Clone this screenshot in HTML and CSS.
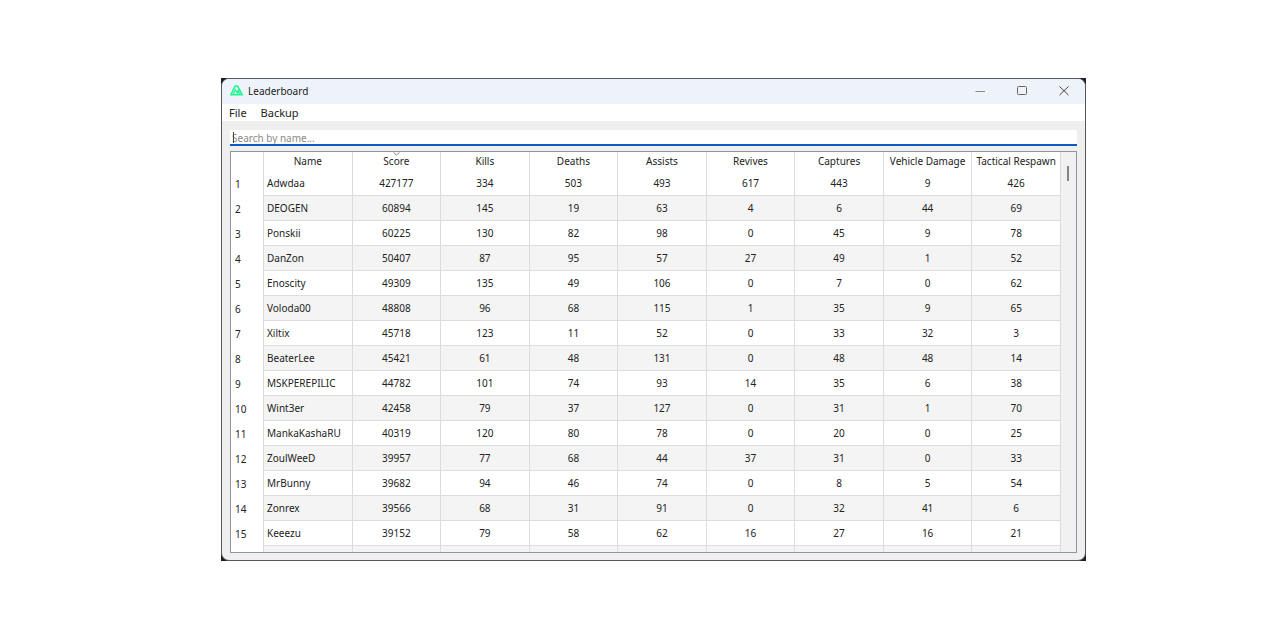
FILE: index.html
```html
<!DOCTYPE html>
<html lang="en">
<head>
  <meta charset="UTF-8">
  <title>Leaderboard</title>
  <link rel="stylesheet" href="styles.css">
</head>
<body>

<div class="frame">
  <div class="window">
    <header class="titlebar">
      <svg class="logo" width="13" height="11" viewBox="0 0 13 11" fill="none" stroke="#1df58e">
        <path d="M0.9 9.8L5.2 1H7.6L12.1 9.8Z" stroke-width="1.6" />
        <path d="M3.4 9.4L5.4 4.6L7.2 8.2L8.2 5.2L9.8 9.4" stroke-width="1.2" />
      </svg>
      <span class="title">Leaderboard</span>
      <button class="win-btn" aria-label="Minimize">
        <svg width="10" height="10" viewBox="0 0 10 10"><path d="M0.5 5.5H10" stroke="#888" /></svg>
      </button>
      <button class="win-btn" aria-label="Maximize">
        <svg width="10" height="10" viewBox="0 0 10 10"><rect x="0.5" y="0.5" width="9" height="8" rx="1" fill="none" stroke="#666" /></svg>
      </button>
      <button class="win-btn" aria-label="Close">
        <svg width="10" height="10" viewBox="0 0 10 10"><path d="M0.5 0.5L9.5 9M9.5 0.5L0.5 9" stroke="#444" /></svg>
      </button>
    </header>

    <nav class="menu">
      <button>File</button>
      <button>Backup</button>
    </nav>

    <main class="content">
      <div class="search">
        <input type="text" id="search" placeholder="Search by name..." aria-label="Search by name">
        <span class="caret"></span>
      </div>

      <div class="grid">
        <div class="rows">
          <table>
            <thead>
              <tr>
                <th class="num"></th>
                <th>Name</th>
                <th class="sorted">Score<svg class="arrow" width="7" height="4" viewBox="0 0 7 4"><path d="M0.5 0.5L3.5 3L6.5 0.5" fill="none" stroke="#888" /></svg></th>
                <th>Kills</th>
                <th>Deaths</th>
                <th>Assists</th>
                <th>Revives</th>
                <th>Captures</th>
                <th>Vehicle Damage</th>
                <th>Tactical Respawn</th>
              </tr>
            </thead>
            <tbody id="players"></tbody>
          </table>
        </div>
        <div class="scrollbar"><div class="thumb"></div></div>
      </div>
    </main>
  </div>
</div>

<script>
  const players = [
    ['Adwdaa', 427177, 334, 503, 493, 617, 443, 9, 426],
    ['DEOGEN', 60894, 145, 19, 63, 4, 6, 44, 69],
    ['Ponskii', 60225, 130, 82, 98, 0, 45, 9, 78],
    ['DanZon', 50407, 87, 95, 57, 27, 49, 1, 52],
    ['Enoscity', 49309, 135, 49, 106, 0, 7, 0, 62],
    ['Voloda00', 48808, 96, 68, 115, 1, 35, 9, 65],
    ['Xiltix', 45718, 123, 11, 52, 0, 33, 32, 3],
    ['BeaterLee', 45421, 61, 48, 131, 0, 48, 48, 14],
    ['MSKPEREPILIC', 44782, 101, 74, 93, 14, 35, 6, 38],
    ['Wint3er', 42458, 79, 37, 127, 0, 31, 1, 70],
    ['MankaKashaRU', 40319, 120, 80, 78, 0, 20, 0, 25],
    ['ZoulWeeD', 39957, 77, 68, 44, 37, 31, 0, 33],
    ['MrBunny', 39682, 94, 46, 74, 0, 8, 5, 54],
    ['Zonrex', 39566, 68, 31, 91, 0, 32, 41, 6],
    ['Keeezu', 39152, 79, 58, 62, 16, 27, 16, 21],
    ['', '', '', '', '', '', '', '', '']
  ];

  const body = document.getElementById('players');

  function render(filter) {
    body.innerHTML = '';
    players.forEach((player, i) => {
      if (!player[0].toLowerCase().includes(filter)) return;
      const row = body.insertRow();
      const num = document.createElement('th');
      num.className = 'num';
      num.textContent = player[0] ? i + 1 : '';
      row.appendChild(num);
      player.forEach(value => {
        row.insertCell().textContent = value;
      });
    });
  }

  document.getElementById('search').addEventListener('input', e => {
    render(e.target.value.toLowerCase());
  });

  render('');
</script>

</body>
</html>
```
FILE: styles.css
```css
* {
  box-sizing: border-box;
}
body {
  margin: 0;
  padding: 78px 194px 0 221px;
  background: white;
  color: #222;
  font-family: "Noto Sans", "Open Sans", sans-serif;
  font-size: 10px;
}
button {
  padding: 0;
  border: none;
  background: none;
  color: inherit;
  font: inherit;
}
.frame {
  background: #1c2026;
}
.window {
  border: 1px solid #55585c;
  border-radius: 8px;
  background: #efefef;
  overflow: hidden;
}
.titlebar {
  display: flex;
  align-items: center;
  height: 25px;
  padding: 0 0 2px 8px;
  background: #eef3f9;
}
.title {
  flex: 1;
  padding-left: 5px;
}
.win-btn {
  display: flex;
  align-items: center;
  justify-content: center;
  width: 42px;
  height: 22px;
}
.menu {
  display: flex;
  gap: 14px;
  height: 17px;
  padding: 0 7px;
  background: white;
  font-size: 11px;
}
.content {
  padding: 9px 8px 7px;
}
.search {
  position: relative;
  margin-bottom: 5px;
}
.search input {
  display: block;
  width: 100%;
  height: 16px;
  padding: 2px 2px 0;
  border: none;
  border-bottom: 2px solid #0a5cc0;
  outline: none;
  background: white;
  font: inherit;
}
.search input::placeholder {
  color: #8a8a8a;
}
.caret {
  position: absolute;
  left: 3px;
  top: 2px;
  width: 1px;
  height: 11px;
  background: #444;
}
.grid {
  display: flex;
  height: 402px;
  border: 1px solid #8f959c;
  background: white;
}
.rows {
  flex: 1;
  overflow: hidden;
}
table {
  width: 100%;
  table-layout: fixed;
  border-collapse: separate;
  border-spacing: 0;
}
th,
td {
  height: 25px;
  padding: 0 3px;
  border-right: 1px solid #dcdcdc;
  border-bottom: 1px solid #dcdcdc;
  font-weight: normal;
  line-height: 14px;
  text-align: center;
  white-space: nowrap;
}
thead th {
  height: 19px;
  padding: 0 0 2px;
  border-bottom: none;
}
.num {
  width: 33px;
  padding-left: 4px;
  border-bottom: none;
  text-align: left;
}
td:nth-child(2) {
  text-align: left;
}
tbody tr:nth-child(even) td {
  background: #f4f4f4;
}
.sorted {
  position: relative;
}
.arrow {
  position: absolute;
  left: 50%;
  top: 0;
  margin-left: -3px;
}
.scrollbar {
  width: 15px;
  padding: 14px 7px 0 0;
  background: #f1f1f1;
}
.thumb {
  width: 2px;
  height: 15px;
  margin-left: auto;
  background: #858585;
}
```
